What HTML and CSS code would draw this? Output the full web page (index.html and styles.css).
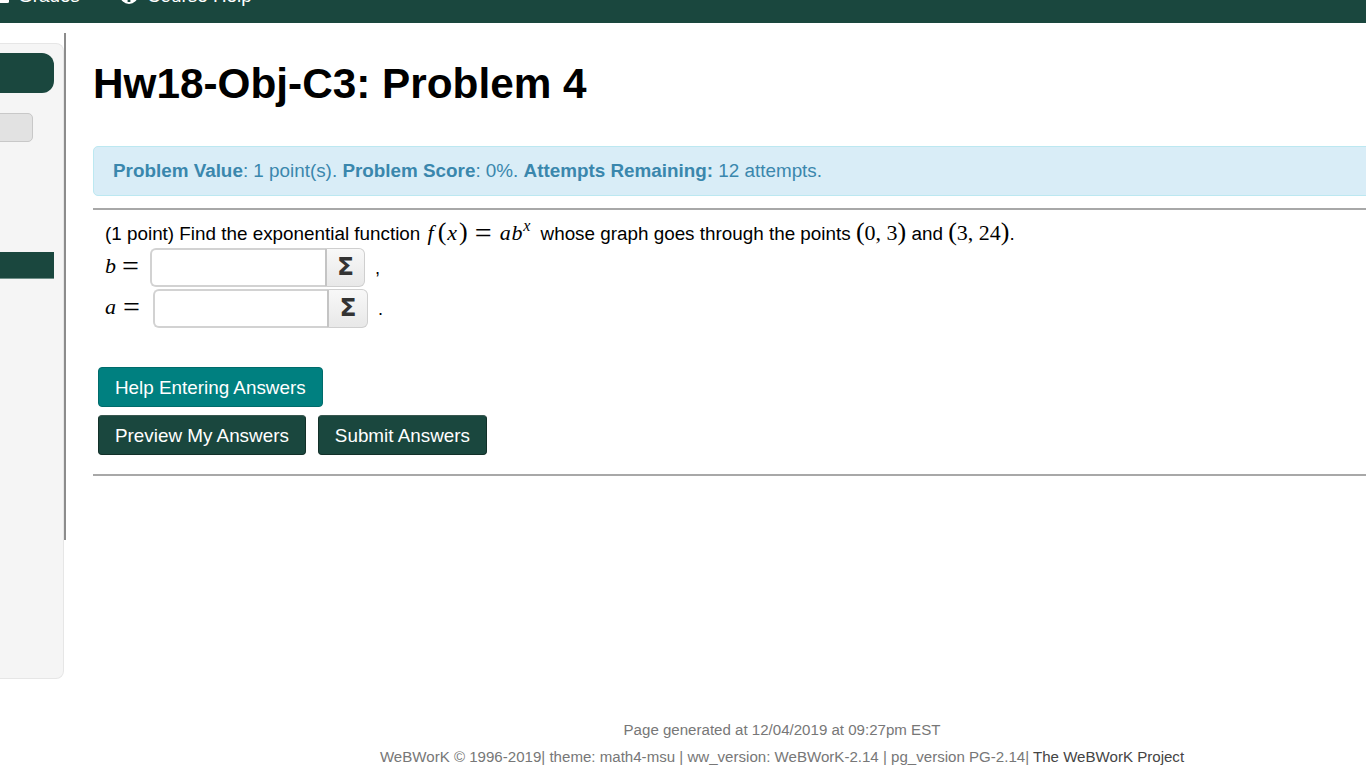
FILE: index.html
```html
<!DOCTYPE html>
<html lang="en">
<head>
<meta charset="utf-8">
<title>Hw18-Obj-C3: Problem 4</title>
<link rel="stylesheet" href="styles.css">
</head>
<body>
<nav class="topbar">
  <span class="nav-item grades"><svg class="nav-icon icon-grades" viewBox="0 0 9 18" width="9" height="18"><rect x="-6" y="0" width="15" height="18" rx="1.5" fill="#fff"/></svg>Grades</span>
  <span class="nav-item help"><svg class="nav-icon icon-help" viewBox="0 0 18 18" width="18" height="18"><circle cx="9" cy="9" r="9" fill="#fff"/><rect x="7.6" y="13" width="2.8" height="3" fill="#1a473e"/></svg>Course Help</span>
</nav>
<div class="layout">
  <aside class="well">
    <div class="side-head"></div>
    <div class="side-btn"></div>
    <div class="side-active"></div>
  </aside>
  <main class="content">
    <h1 class="title">Hw18-Obj-C3: Problem 4</h1>
    <div class="alert"><b>Problem Value</b>: 1 point(s). <b>Problem Score</b>: 0%. <b>Attempts Remaining:</b> 12 attempts.</div>
    <hr class="rule rule-top">
    <div class="problem">
      <p class="line">(1 point) Find the exponential function <span class="m formula"><i class="mf">f</i><span class="p">(</span><i class="mx">x</i><span class="p pr">)</span><span class="eq">=</span><i class="ab">ab</i><sup>x</sup></span> whose graph goes through the points <span class="m"><span class="p">(</span>0, 3<span class="p">)</span></span> and <span class="m"><span class="p">(</span>3, 24<span class="p">)</span></span>.</p>
      <div class="answer row-b">
        <span class="m var"><i>b</i><span class="eq">=</span></span>
        <input class="field field-b" type="text" aria-label="b">
        <button class="sigma sigma-b" type="button">Σ</button>
        <span class="punct">,</span>
      </div>
      <div class="answer row-a">
        <span class="m var"><i>a</i><span class="eq">=</span></span>
        <input class="field field-a" type="text" aria-label="a">
        <button class="sigma sigma-a" type="button">Σ</button>
        <span class="punct">.</span>
      </div>
    </div>
    <div class="actions">
      <button class="btn btn-help" type="button">Help Entering Answers</button>
      <div class="btn-row">
        <button class="btn btn-dark btn-preview" type="button">Preview My Answers</button>
        <button class="btn btn-dark btn-submit" type="button">Submit Answers</button>
      </div>
    </div>
    <hr class="rule rule-bottom">
  </main>
</div>
<footer class="footer">
  <p class="gen">Page generated at 12/04/2019 at 09:27pm EST</p>
  <p class="copy">WeBWorK © 1996-2019| theme: math4-msu | ww_version: WeBWorK-2.14 | pg_version PG-2.14| <span class="copy-link">The WeBWorK Project</span></p>
</footer>
</body>
</html>
```

FILE: styles.css
```css
* { box-sizing: border-box; }
html, body { margin: 0; height: 768px; overflow: hidden; background: #fff; }
body { font-family: "Liberation Sans", Arial, sans-serif; color: #000; }

.topbar { height: 23px; background: #1a473e; display: flex; align-items: flex-end; padding-bottom: 16px; overflow: hidden; color: #fff; font-size: 18.85px; line-height: 22px; }
.nav-item { display: flex; align-items: flex-end; white-space: nowrap; }
.nav-icon { flex: none; }
.icon-grades { margin-bottom: 4px; }
.icon-help { margin-bottom: 3px; }
.grades { gap: 9px; width: 120px; }
.help { gap: 9px; }

.layout { display: flex; align-items: flex-start; height: 657px; }
.well { width: 64px; height: 636px; margin-top: 20px; flex: none; background: #f5f5f5; border: 1px solid #e6e6e6; border-left: 0; border-radius: 0 8px 8px 0; padding-top: 9px; display: flex; flex-direction: column; align-items: flex-end; padding-right: 9px; }
.side-head { width: 100%; height: 40px; background: #1a473e; border-radius: 0 12px 12px 0; }
.side-btn { width: 44px; align-self: flex-start; margin-left: -11px; height: 29px; margin-top: 20px; background: #e2e2e2; border: 1px solid #c8c8c8; border-radius: 5px; }
.side-active { width: 100%; height: 27px; margin-top: 110px; background: #1a473e; border-bottom: 1px solid #6f8f88; }

.content { width: 1302px; flex: none; margin-top: 10px; height: 507px; border-left: 2px solid #8c8c8c; padding-left: 27px; }
.title { margin: 26px 0 0; font-size: 42.3px; line-height: 50px; font-weight: 700; white-space: nowrap; }
.alert { margin-top: 37px; height: 50px; width: 1290px; background: #d9edf7; border: 1px solid #bce8f1; border-radius: 5px; padding: 0 19px; color: #3a87ad; font-size: 18.85px; line-height: 48px; white-space: nowrap; }
.rule { margin: 0; border: 0; height: 2px; background: #a8a8a8; width: 1273px; }
.rule-top { margin-top: 12px; }
.rule-bottom { margin-top: 19px; }

.problem { padding-left: 12px; font-size: 18.85px; }
.line { margin: 10px 0 0; height: 28px; line-height: 26px; white-space: nowrap; }
.m { font-family: "Liberation Serif", "DejaVu Serif", serif; font-size: 22px; }
.m sup { font-size: 16px; font-style: italic; line-height: 0; vertical-align: 9px; margin-right: 5px; }
.formula { margin-left: 2px; }
.mf { margin-right: 4px; }
.mx { margin-left: 1px; }
.ab { letter-spacing: 0.75px; }
.pr { margin-left: 2px; }
.p { font-size: 26px; line-height: 0; font-style: normal; }
.eq { font-size: 30px; line-height: 0; margin: 0 8px 0 7px; vertical-align: -3px; }
.answer { display: flex; align-items: center; height: 41px; }
.var { flex: none; line-height: 36px; padding-bottom: 5px; }
.row-b .var { width: 45px; }
.row-b .eq { margin-left: 6px; }
.row-a .var { width: 48px; }
.field { align-self: flex-start; height: 39px; border: 2px solid #d2d2d2; border-right: 0; border-radius: 6px 0 0 6px; background: #fff; padding: 0; margin: 0; }
.field-b { width: 175px; }
.field-a { width: 174px; }
.sigma { align-self: flex-start; height: 39px; border: 1px solid #cfcfcf; border-left: 2px solid #c4c4c4; border-radius: 0 6px 6px 0; background: linear-gradient(#f8f8f8, #e8e8e8); color: #333; font-family: "DejaVu Sans", sans-serif; font-weight: 700; font-size: 25px; line-height: 1; padding: 0 0 3px; margin: 0; }
.sigma-b { width: 40px; }
.sigma-a { width: 41px; }
.punct { margin-left: 10px; font-size: 18.2px; }

.actions { padding-left: 5px; margin-top: 37px; }
.btn { display: block; height: 40px; font-family: inherit; font-size: 18.85px; color: #fff; border-radius: 4px; padding: 1px 16px 0; margin: 0; white-space: nowrap; }
.btn-help { background: #008080; border: 1px solid #006b6b; }
.btn-row { display: flex; gap: 12px; margin-top: 8px; }
.btn-dark { background: #1a473e; border: 1px solid #123029; border-top-color: #38574f; }

.footer { padding-left: 198px; text-align: center; color: #777; font-size: 15.08px; }
.footer p { margin: 0; line-height: 27px; }
.gen { padding-top: 36px; }
.copy-link { color: #444; }
```
